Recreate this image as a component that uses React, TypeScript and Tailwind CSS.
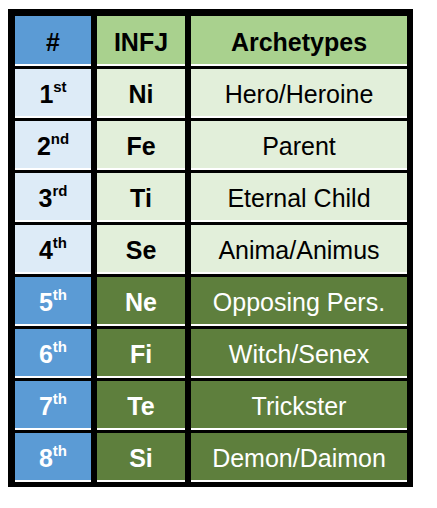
import React from "react";

const rows = [
  { n: "1", sup: "st", fn: "Ni", arch: "Hero/Heroine", dark: false },
  { n: "2", sup: "nd", fn: "Fe", arch: "Parent", dark: false },
  { n: "3", sup: "rd", fn: "Ti", arch: "Eternal Child", dark: false },
  { n: "4", sup: "th", fn: "Se", arch: "Anima/Animus", dark: false },
  { n: "5", sup: "th", fn: "Ne", arch: "Opposing Pers.", dark: true },
  { n: "6", sup: "th", fn: "Fi", arch: "Witch/Senex", dark: true },
  { n: "7", sup: "th", fn: "Te", arch: "Trickster", dark: true },
  { n: "8", sup: "th", fn: "Si", arch: "Demon/Daimon", dark: true },
];

const App: React.FC = () => {
  return (
    <div className="min-h-screen bg-white pl-[8px] pt-[9px] font-['Liberation_Sans',Arial,sans-serif]">
      <div className="w-[405px] bg-black pl-[7px] pr-[6px] pt-[7px] pb-[5px]">
        <div className="grid grid-cols-[76px_88px_216px] gap-x-[6px] gap-y-[3px]">
          {/* header */}
          <div className="h-[50px] bg-[#5b9bd5] border-b-2 border-white flex items-center justify-center pt-[5px] text-[25px] font-bold text-black">
            #
          </div>
          <div className="h-[50px] bg-[#a9d18e] border-b-2 border-white flex items-center justify-center pt-[5px] text-[25px] font-bold text-black">
            INFJ
          </div>
          <div className="h-[50px] bg-[#a9d18e] border-b-2 border-white flex items-center justify-center pt-[5px] text-[25px] font-bold text-black">
            Archetypes
          </div>

          {rows.map((r) => (
            <React.Fragment key={r.n}>
              <div
                className={`h-[49px] border-b-2 border-white flex items-center justify-center pt-[4px] text-[25px] font-bold ${
                  r.dark ? "bg-[#5b9bd5] text-white" : "bg-[#ddebf7] text-black"
                }`}
              >
                <span>
                  {r.n}
                  <sup className="text-[15px] top-[-0.7em]">{r.sup}</sup>
                </span>
              </div>
              <div
                className={`h-[49px] border-b-2 border-white flex items-center justify-center pt-[4px] text-[25px] font-bold ${
                  r.dark ? "bg-[#5e7f3d] text-white" : "bg-[#e2efda] text-black"
                }`}
              >
                {r.fn}
              </div>
              <div
                className={`h-[49px] border-b-2 border-white flex items-center justify-center pt-[4px] text-[25px] ${
                  r.dark ? "bg-[#5e7f3d] text-white" : "bg-[#e2efda] text-black"
                }`}
              >
                {r.arch}
              </div>
            </React.Fragment>
          ))}
        </div>
      </div>
    </div>
  );
};

export default App;
